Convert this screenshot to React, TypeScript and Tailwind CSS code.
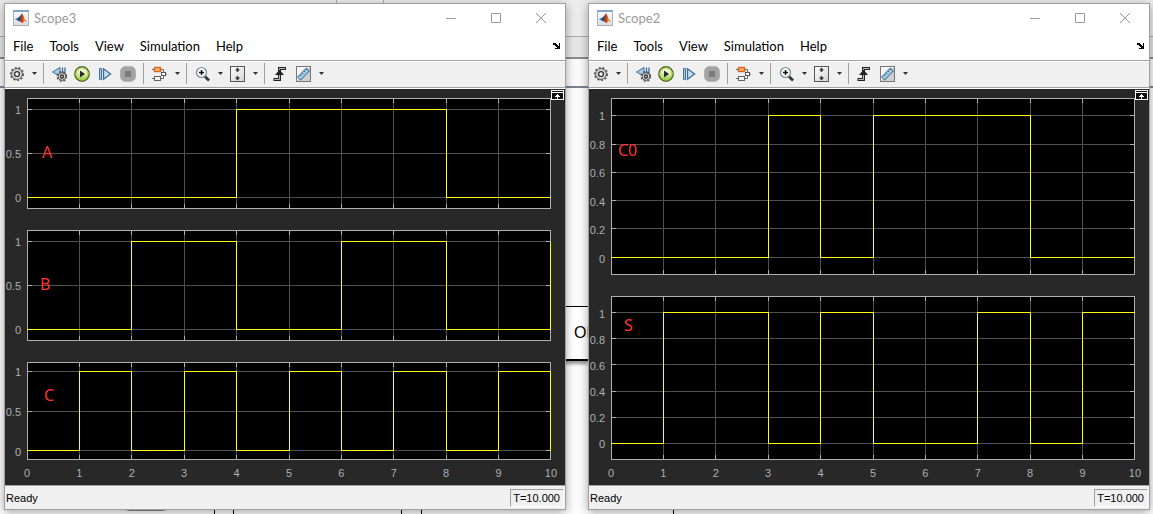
import type { ReactNode } from 'react';

interface Signal {
  name: string;
  // level at every whole second, 0 to 10
  levels: number[];
  height: number;
  ticks: string[];
  tickY: number[];
  boxClass: string;
  axisClass: string;
  noteClass: string;
}

const GRID_X = [0, 52, 104, 157, 209, 262, 314, 366, 419, 471, 523];
const HALVES = ['1', '0.5', '0'];
const FIFTHS = ['1', '0.8', '0.6', '0.4', '0.2', '0'];
const MENUS = ['File', 'Tools', 'View', 'Simulation', 'Help'];

const inputSignals: Signal[] = [
  {
    name: 'A',
    levels: [0, 0, 0, 0, 1, 1, 1, 1, 0, 0, 0],
    height: 111,
    ticks: HALVES,
    tickY: [11, 55, 99],
    boxClass: 'h-[111px]',
    axisClass: 'pt-3 pb-[11px]',
    noteClass: 'left-3.5 top-[46px]',
  },
  {
    name: 'B',
    levels: [0, 0, 1, 1, 0, 0, 1, 1, 0, 0, 1],
    height: 111,
    ticks: HALVES,
    tickY: [11, 55, 99],
    boxClass: 'h-[111px]',
    axisClass: 'pt-3 pb-[11px]',
    noteClass: 'left-3 top-[46px]',
  },
  {
    name: 'C',
    levels: [0, 1, 0, 1, 0, 1, 0, 1, 0, 1, 0],
    height: 98,
    ticks: HALVES,
    tickY: [9, 49, 88],
    boxClass: 'h-[98px]',
    axisClass: 'pt-2.5 pb-2',
    noteClass: 'left-4 top-[25px]',
  },
];

const outputSignals: Signal[] = [
  {
    name: 'C0',
    levels: [0, 0, 0, 1, 0, 1, 1, 1, 0, 0, 0],
    height: 177,
    ticks: FIFTHS,
    tickY: [17, 46, 74, 102, 130, 159],
    boxClass: 'h-[177px]',
    axisClass: 'pt-[18px] pb-4',
    noteClass: 'left-1.5 top-11',
  },
  {
    name: 'S',
    levels: [0, 1, 1, 0, 1, 0, 0, 1, 0, 1, 1],
    height: 164,
    ticks: FIFTHS,
    tickY: [16, 42, 68, 95, 121, 147],
    boxClass: 'h-[164px]',
    axisClass: 'pt-[18px] pb-4',
    noteClass: 'left-3 top-[21px]',
  },
];

function MatlabIcon() {
  return (
    <svg width="16" height="16" viewBox="0 0 16 16" aria-hidden="true">
      <defs>
        <linearGradient id="matlabBg" x1="0" y1="0" x2="0" y2="1">
          <stop offset="0" stopColor="#ffffff" />
          <stop offset="1" stopColor="#d9dde2" />
        </linearGradient>
        <linearGradient id="matlabPeak" x1="0" y1="0" x2="1" y2="0">
          <stop offset="0" stopColor="#7c1e12" />
          <stop offset="0.45" stopColor="#d9481c" />
          <stop offset="0.7" stopColor="#f5a02c" />
          <stop offset="1" stopColor="#b8330f" />
        </linearGradient>
      </defs>
      <rect x="0.5" y="0.5" width="15" height="15" fill="url(#matlabBg)" stroke="#a9b2bc" />
      <rect x="0" y="0" width="16" height="2" fill="#7fa6c8" />
      <path d="M2 9.2 5.2 7.6 7 8.8 4.8 10.8z" fill="#2f78b7" />
      <path d="M5.2 7.6C6.6 6.8 7.6 4.8 8.8 3.4L7.6 9.6 6 11.4 4.8 10.6z" fill="#274f80" />
      <path d="M8.8 3.2C10.4 4 11.4 9 14 12 12 10.8 11 11 9.2 13.4 8.4 12 7.4 11 6.2 11.2 7.8 9.6 8 5 8.8 3.2z" fill="url(#matlabPeak)" />
    </svg>
  );
}

function GearShape({ r, hub }: { r: number; hub: number }) {
  return (
    <>
      <circle r={r} fill="#d8d8d8" stroke="#5a5a5a" strokeWidth="1" />
      <circle r={r + 0.9} fill="none" stroke="#555" strokeWidth="1.6" strokeDasharray="2 1.8" />
      <circle r={hub} fill="#fff" stroke="#333" strokeWidth="1.4" />
    </>
  );
}

function SettingsIcon() {
  return (
    <svg width="16" height="16" viewBox="0 0 16 16" aria-hidden="true">
      <g transform="translate(9 8)">
        <GearShape r={5.4} hub={2.4} />
      </g>
    </svg>
  );
}

function StepOptionsIcon() {
  return (
    <svg width="16" height="16" viewBox="0 0 16 16" aria-hidden="true">
      <path d="M9 1.5v9L1.5 6z" fill="#a9cbe6" stroke="#3d6d96" />
      <path d="M11.5 1.5v7M14 1.5v7" stroke="#3d6d96" strokeWidth="1.3" />
      <g transform="translate(11 10.5)">
        <GearShape r={3.8} hub={1.5} />
      </g>
    </svg>
  );
}

function RunIcon() {
  return (
    <svg width="16" height="16" viewBox="0 0 16 16" aria-hidden="true">
      <defs>
        <linearGradient id="runFill" x1="0" y1="0" x2="0" y2="1">
          <stop offset="0" stopColor="#ffffff" />
          <stop offset="0.5" stopColor="#dcedb0" />
          <stop offset="1" stopColor="#8fc43a" />
        </linearGradient>
      </defs>
      <circle cx="8" cy="8" r="7.2" fill="url(#runFill)" stroke="#4f6b1f" strokeWidth="1.4" />
      <circle cx="8" cy="8" r="6" fill="none" stroke="#a5d03c" />
      <path d="M6 4.5v7L11 8z" fill="#2a2a2a" />
    </svg>
  );
}

function StepForwardIcon() {
  return (
    <svg width="16" height="16" viewBox="0 0 16 16" aria-hidden="true">
      <path d="M2.5 2.5h2v11h-2z" fill="#a9cbe6" stroke="#46749c" />
      <path d="M6.5 2.7v10.6L13.6 8z" fill="#c5def0" stroke="#3d6d96" strokeWidth="1.3" />
    </svg>
  );
}

function StopIcon() {
  return (
    <svg width="16" height="16" viewBox="0 0 16 16" aria-hidden="true">
      <rect x="0.5" y="0.5" width="15" height="15" rx="5" fill="#a3a3a3" stroke="#b3b3b3" />
      <rect x="5" y="5" width="6" height="6" fill="#7d7d7d" />
    </svg>
  );
}

function HighlightIcon() {
  return (
    <svg width="16" height="16" viewBox="0 0 16 16" aria-hidden="true">
      <path d="M9 3.5h3.5V6M12.5 10v2.5H9" fill="none" stroke="#666" />
      <rect x="3.5" y="1.500" width="6" height="4" fill="#ffb566" stroke="#e0641b" strokeWidth="1.4" />
      <rect x="10.500" y="6.500" width="4" height="3" fill="#fff" stroke="#555" />
      <rect x="3.5" y="10.500" width="6" height="4" fill="#f5f5f5" stroke="#666" />
      <path d="M1 3.500h2M1 12.500h2M14.500 8H16" stroke="#666" />
    </svg>
  );
}

function ZoomIcon() {
  return (
    <svg width="16" height="16" viewBox="0 0 16 16" aria-hidden="true">
      <path d="M11 10.500l4 4" stroke="#333" strokeWidth="2.600" />
      <circle cx="7.500" cy="6.500" r="5" fill="#f4f9fd" stroke="#7d8891" strokeWidth="1.200" />
      <path d="M5 6.500h5M7.500 4v5" stroke="#111" strokeWidth="1.400" />
    </svg>
  );
}

function FitIcon() {
  return (
    <svg width="16" height="16" viewBox="0 0 16 16" aria-hidden="true">
      <defs>
        <linearGradient id="fitBg" x1="0" y1="0" x2="1" y2="1">
          <stop offset="0" stopColor="#ffffff" />
          <stop offset="1" stopColor="#d4d4d4" />
        </linearGradient>
      </defs>
      <rect x="1.500" y="0.500" width="14" height="15" fill="url(#fitBg)" stroke="#555" />
      <path d="M8.500 1.500l2.500 3h-5zM8.500 14.500l2.500-3h-5z" fill="#333" />
      <path d="M8.500 4v2M8.500 10v2" stroke="#333" strokeWidth="1.400" />
    </svg>
  );
}

function TriggerIcon() {
  return (
    <svg width="16" height="16" viewBox="0 0 16 16" aria-hidden="true">
      <path d="M1.500 13.500H7.500V2.500h6.500" fill="none" stroke="#222" strokeWidth="3" />
      <path d="M2.500 13.500h5V2.500h5.500" fill="none" stroke="#bbb" strokeWidth="1" />
      <path d="M7.500 3.800l4.500 5.200H3z" fill="#222" />
    </svg>
  );
}

function MeasureIcon() {
  return (
    <svg width="16" height="16" viewBox="0 0 16 16" aria-hidden="true">
      <rect x="1.500" y="0.500" width="14" height="15" fill="#f8f8f8" stroke="#777" />
      <path d="M15 1v14H2z" fill="#cfcfcf" />
      <path d="M2.500 11.200L11.300 2l3.200 2.800L5.700 14z" fill="#a5cfeb" stroke="#2f6187" />
      <path d="M5 9l1.300 1.200M7 7l1.300 1.200M9 5l1.300 1.200M11 3l1.300 1.200" stroke="#2f6187" />
    </svg>
  );
}

function ToolButton({ label, children }: { label: string; children: ReactNode }) {
  return (
    <button type="button" aria-label={label} className="size-4 shrink-0">
      {children}
    </button>
  );
}

function Caret({ label }: { label: string }) {
  return (
    <button type="button" aria-label={label} className="flex h-4 w-[19px] shrink-0 items-center justify-center pl-0.5">
      <svg width="5" height="3" viewBox="0 0 5 3" aria-hidden="true">
        <path d="M0 0h5L2.500 3z" fill="#333" />
      </svg>
    </button>
  );
}

function Separator() {
  return <div className="h-[21px] w-px shrink-0 bg-[#a0a0a0]" />;
}

function Toolbar() {
  return (
    <div className="flex h-[27px] items-center border-t border-b border-t-white border-b-[#a0a0a0] bg-[#f0f0f0] pb-0.5 pl-[3px]">
      <ToolButton label="Configuration Properties"><SettingsIcon /></ToolButton>
      <Caret label="More configuration" />
      <Separator />
      <div className="flex gap-[7px] px-[7px]">
        <ToolButton label="Step Back"><StepOptionsIcon /></ToolButton>
        <ToolButton label="Run"><RunIcon /></ToolButton>
        <ToolButton label="Step Forward"><StepForwardIcon /></ToolButton>
        <ToolButton label="Stop"><StopIcon /></ToolButton>
      </div>
      <Separator />
      <div className="flex pl-[7px]">
        <ToolButton label="Highlight Block"><HighlightIcon /></ToolButton>
        <Caret label="More highlighting" />
      </div>
      <Separator />
      <div className="flex pl-[7px]">
        <ToolButton label="Zoom"><ZoomIcon /></ToolButton>
        <Caret label="More zoom" />
        <ToolButton label="Scale Y-Axis"><FitIcon /></ToolButton>
        <Caret label="More scaling" />
      </div>
      <Separator />
      <div className="flex gap-[7px] pl-[7px]">
        <ToolButton label="Triggers"><TriggerIcon /></ToolButton>
        <div className="flex">
          <ToolButton label="Measurements"><MeasureIcon /></ToolButton>
          <Caret label="More measurements" />
        </div>
      </div>
    </div>
  );
}

function TitleBar({ title }: { title: string }) {
  return (
    <header className="flex h-[29px] items-center pr-0.5 pb-px pl-2">
      <MatlabIcon />
      <h1 className="ml-[5px] flex-1 font-[Lato,'Noto_Sans',sans-serif] text-[13px] leading-4 text-[#999]">{title}</h1>
      <button type="button" aria-label="Minimize" className="flex h-full w-[45px] items-center justify-center">
        <svg width="10" height="10" viewBox="0 0 10 10" aria-hidden="true">
          <path d="M0 5.500h10" stroke="#999" />
        </svg>
      </button>
      <button type="button" aria-label="Maximize" className="flex h-full w-[45px] items-center justify-center">
        <svg width="10" height="10" viewBox="0 0 10 10" aria-hidden="true">
          <path d="M0.500 0.500h9v9h-9z" fill="none" stroke="#999" />
        </svg>
      </button>
      <button type="button" aria-label="Close" className="flex h-full w-[45px] items-center justify-center">
        <svg width="10" height="10" viewBox="0 0 10 10" aria-hidden="true">
          <path d="M0 0l10 10M10 0L0 10" stroke="#999" />
        </svg>
      </button>
    </header>
  );
}

function MenuBar() {
  return (
    <nav className="flex h-7 items-center gap-4 border-b border-[#a0a0a0] pr-1 pb-0.5 pl-2 font-[Lato,'Noto_Sans',sans-serif] text-[13px] leading-4 text-black">
      {MENUS.map((menu) => (
        <button key={menu} type="button">{menu}</button>
      ))}
      <button type="button" aria-label="Dock" className="ml-auto">
        <svg width="8" height="8" viewBox="0 0 8 8" shapeRendering="crispEdges" aria-hidden="true">
          <path d="M0 1h3v1h1v1h1v1h1V1h1v6H2V6h2V5H3V4H2V3H0z" fill="#000" />
        </svg>
      </button>
    </nav>
  );
}

function tracePath({ levels, tickY }: Signal) {
  const high = tickY[0] + 0.5;
  const low = tickY[tickY.length - 1] + 0.5;
  const y = (level: number) => (level ? high : low);
  return levels
    .map((level, i) => (i === 0 ? `M0 ${y(level)}` : `H${GRID_X[i] + 0.5}V${y(level)}`))
    .join('');
}

function Plot({ signal }: { signal: Signal }) {
  const { height, tickY } = signal;
  const innerX = GRID_X.slice(1, -1);
  const grid =
    innerX.map((x) => `M${x + 0.5} 0V${height}`).join('') + tickY.map((y) => `M0 ${y + 0.5}H524`).join('');
  const marks =
    innerX.map((x) => `M${x + 0.5} 0v5M${x + 0.5} ${height}v-5`).join('') +
    tickY.map((y) => `M0 ${y + 0.5}h5M524 ${y + 0.5}h-5`).join('');

  return (
    <div className={`flex ${signal.boxClass}`}>
      <div className={`flex w-[22px] shrink-0 flex-col justify-between pr-1.5 ${signal.axisClass}`}>
        {signal.ticks.map((tick) => (
          <span key={tick} className="flex h-0 items-center justify-end">{tick}</span>
        ))}
      </div>
      <div className="relative min-w-0 flex-1">
        <svg
          className="block size-full"
          viewBox={`0 0 524 ${height}`}
          preserveAspectRatio="none"
          shapeRendering="crispEdges"
          fill="none"
          role="img"
          aria-label={signal.name}
        >
          <rect width="524" height={height} fill="#000" />
          <path d={grid} stroke="#505050" vectorEffect="non-scaling-stroke" />
          <path d={marks} stroke="#afafaf" vectorEffect="non-scaling-stroke" />
          <rect x="0.500" y="0.500" width="523" height={height - 1} stroke="#afafaf" vectorEffect="non-scaling-stroke" />
          <path d={tracePath(signal)} stroke="#ffff11" vectorEffect="non-scaling-stroke" />
        </svg>
        <span className={`absolute pl-px font-['Noto_Sans',sans-serif] text-base leading-4 text-[#ff3333] ${signal.noteClass}`}>
          {signal.name}
        </span>
      </div>
    </div>
  );
}

function ScopeWindow({ title, signals }: { title: string; signals: Signal[] }) {
  return (
    <section className="relative min-w-0 flex-1 border border-[#a0a0a0] bg-white shadow-[0_2px_9px_rgba(0,0,0,0.35)]">
      <TitleBar title={title} />
      <MenuBar />
      <Toolbar />
      <main className="relative border-t border-white bg-[#282828] pt-[9px] pr-3.5 font-['Liberation_Sans',sans-serif] text-[11px] leading-3 text-[#afafaf]">
        <button type="button" aria-label="Maximize axes" className="absolute top-px right-px">
          <svg className="block" width="13" height="10" viewBox="0 0 13 10" shapeRendering="crispEdges" aria-hidden="true">
            <path d="M0.500 0.500h12v9h-12zM0 2.500h13" fill="#111" stroke="#fff" />
            <path d="M6 4h1v1h1v1h1v1H7v2H6V7H4V6h1V5h1z" fill="#fff" />
          </svg>
        </button>
        <div className="flex flex-col gap-[21px]">
          {signals.map((signal) => (
            <Plot key={signal.name} signal={signal} />
          ))}
        </div>
        <div className="flex h-[25px] items-center justify-between pl-[22px]">
          {GRID_X.map((x, second) => (
            <span key={x} className="flex w-0 justify-center">{second}</span>
          ))}
        </div>
      </main>
      <footer className="flex h-6 items-center justify-between border-t border-[#a0a0a0] bg-[#f0f0f0] pr-px pl-px font-['Liberation_Sans',sans-serif] text-[11px] leading-4 text-black">
        <span>Ready</span>
        <span className="border border-t-[#a0a0a0] border-r-white border-b-white border-l-[#a0a0a0] pr-[3px] pl-0.5">T=10.000</span>
      </footer>
    </section>
  );
}

// The Simulink editor that shows in the gaps around the scope windows
function ModelCanvas() {
  return (
    <div className="absolute inset-0 overflow-hidden bg-[#fcfcfc]" aria-hidden="true">
      <div className="h-[37px] border-b border-[#aaa] bg-[#ececec]" />
      <div className="h-[22px] border-b-2 border-[#8a8a92] bg-[#e6e6e6]" />
      <div className="h-[29px] border-b-2 border-[#7d8290] bg-[#fafafa]" />
      <div className="absolute top-0 left-[336px] h-1 w-12 border-x border-[#aaa]" />
      <div className="absolute top-[306px] left-[540px] flex h-[55px] w-12 items-center overflow-hidden border-t border-b-2 border-black bg-white pl-[34px] font-['Liberation_Sans',sans-serif] text-base text-black shadow-[0_3px_3px_rgba(0,0,0,0.4)]">
        OR
      </div>
      <div className="absolute bottom-0 left-[214px] h-5 w-5 border-x border-black" />
      <div className="absolute bottom-0 left-[401px] h-5 w-[21px] border-x border-black" />
      <div className="absolute bottom-0 left-[673px] h-5 w-px bg-black" />
      <div className="absolute bottom-[3px] left-[122px] h-4 w-12 rounded-full bg-[#888]" />
    </div>
  );
}

export default function App() {
  return (
    <div className="relative min-h-screen overflow-hidden">
      <ModelCanvas />
      <div className="flex gap-[22px] pt-[3px] pr-[3px] pb-1 pl-1">
        <ScopeWindow title="Scope3" signals={inputSignals} />
        <ScopeWindow title="Scope2" signals={outputSignals} />
      </div>
    </div>
  );
}
